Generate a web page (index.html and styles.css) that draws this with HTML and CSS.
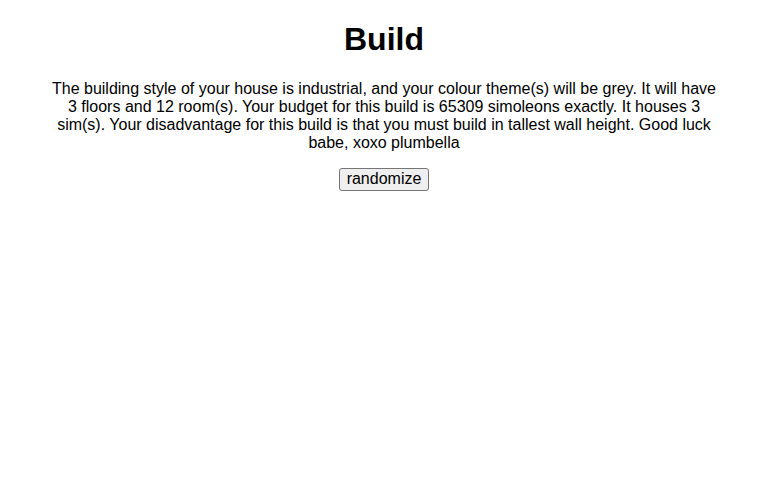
FILE: index.html
```html
<!DOCTYPE html>
<html lang="en">
<head>
<meta charset="utf-8">
<title>Build</title>
<link rel="stylesheet" href="styles.css">
</head>
<body>
<main class="page">
  <h1 class="title">Build</h1>
  <p class="result">The building style of your house is industrial, and your colour theme(s) will be grey. It will have 3 floors and 12 room(s). Your budget for this build is 65309 simoleons exactly. It houses 3 sim(s). Your disadvantage for this build is that you must build in tallest wall height. Good luck babe, xoxo plumbella</p>
  <div class="actions">
    <button class="randomize" type="button">randomize</button>
  </div>
</main>
</body>
</html>
```
FILE: styles.css
```css
html, body {
  margin: 0;
  background: #fff;
}

body {
  font-family: "Liberation Sans", Arial, sans-serif;
  color: #000;
}

.page {
  padding: 0 50px;
  text-align: center;
}

.title {
  font-size: 32px;
  font-weight: bold;
  margin: 21.44px 0;
  line-height: 37px;
}

.result {
  font-size: 16px;
  line-height: 18px;
  margin: 16px 0;
}

.actions {
  margin: 16px 0;
}

.randomize {
  font-family: "Liberation Sans", Arial, sans-serif;
  font-size: 16px;
  color: #000;
  background: #efefef;
  border: 1px solid #767676;
  border-radius: 3px;
  padding: 1px 7px;
  height: 23px;
  line-height: 18px;
}
```
